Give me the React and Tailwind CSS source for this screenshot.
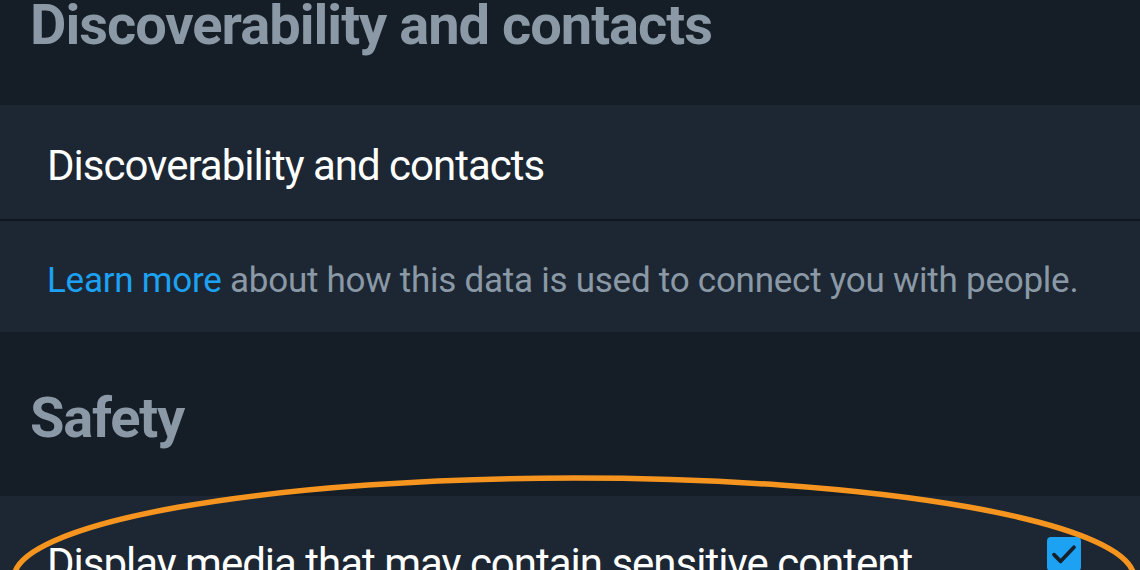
export default function App() {
  return (
    <div className="relative w-[1140px] h-[570px] overflow-hidden bg-[#151d27] font-['Roboto',sans-serif]">
      <div className="h-[105px] px-[30px]">
        <h2 className="text-[56px] leading-[50px] font-bold text-[#8b99a6] tracking-[-1px] whitespace-nowrap">Discoverability and contacts</h2>
      </div>

      <div className="h-[116px] bg-[#1c2733] border-b-2 border-[#10161d] px-[47px] pt-[8px] flex items-center">
        <span className="text-[42px] leading-none text-white tracking-[-1px] whitespace-nowrap">Discoverability and contacts</span>
      </div>

      <div className="h-[111px] bg-[#1c2733] px-[47px] pt-[8px] flex items-center">
        <p className="text-[35px] leading-none text-[#8b99a6] tracking-[-0.25px] whitespace-nowrap">
          <span className="text-[#1da1f2]">Learn more</span> about how this data is used to connect you with people.
        </p>
      </div>

      <div className="h-[164px] px-[30px] pt-[8px] flex items-center">
        <h2 className="text-[56px] leading-none font-bold text-[#8b99a6] tracking-[-1.2px]">Safety</h2>
      </div>

      <div className="h-[117px] bg-[#1c2733] pl-[47px] pr-[59px] pt-[41px] flex items-start justify-between">
        <span className="mt-[6px] text-[42px] leading-none text-white tracking-[-1px] whitespace-nowrap">Display media that may contain sensitive content</span>
        <div className="w-[34px] h-[34px] rounded-[4px] bg-[#1da1f2] flex items-center justify-center">
          <svg viewBox="0 0 24 24" className="w-[32px] h-[32px]" fill="none" stroke="#15202b" strokeWidth="2.8" strokeLinecap="round" strokeLinejoin="round">
            <path d="M4.5 12.5l5 5L19.5 7" />
          </svg>
        </div>
      </div>

      <svg className="absolute left-0 top-0 pointer-events-none" width="1140" height="570" viewBox="0 0 1140 570">
        <ellipse cx="574" cy="578" rx="560" ry="100" fill="none" stroke="#f5951f" strokeWidth="5.5" />
      </svg>
    </div>
  )
}
